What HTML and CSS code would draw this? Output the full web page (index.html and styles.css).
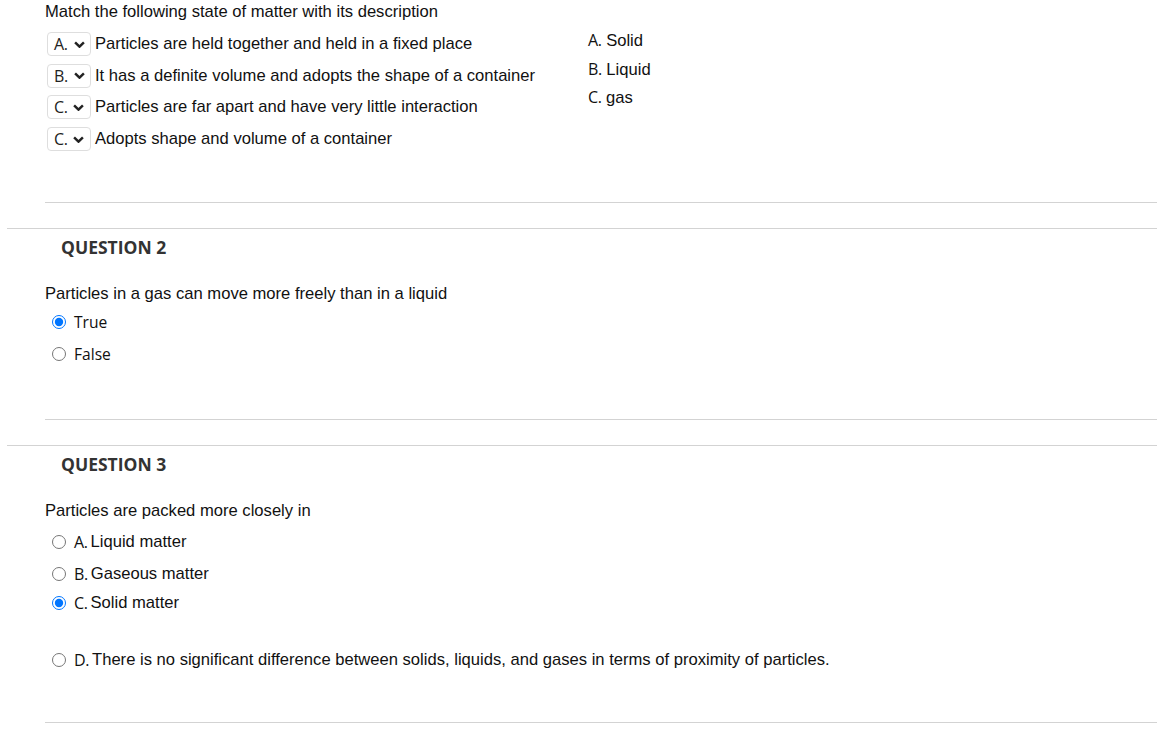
FILE: index.html
```html
<!DOCTYPE html>
<html lang="en">
<head>
  <meta charset="UTF-8">
  <title>Quiz - States of Matter</title>
  <link rel="stylesheet" href="styles.css">
</head>
<body>
  <!-- Question 1: matching -->
  <div class="question q1">
    <div class="prompt first">Match the following state of matter with its description</div>
    <div class="match">
      <div class="match-left">
        <div class="match-row">
          <span class="select">A.<svg class="chev" viewBox="0 0 10 6"><path d="M1 1l4 4 4-4" /></svg></span>
          <span class="desc">Particles are held together and held in a fixed place</span>
        </div>
        <div class="match-row">
          <span class="select">B.<svg class="chev" viewBox="0 0 10 6"><path d="M1 1l4 4 4-4" /></svg></span>
          <span class="desc">It has a definite volume and adopts the shape of a container</span>
        </div>
        <div class="match-row">
          <span class="select">C.<svg class="chev" viewBox="0 0 10 6"><path d="M1 1l4 4 4-4" /></svg></span>
          <span class="desc">Particles are far apart and have very little interaction</span>
        </div>
        <div class="match-row">
          <span class="select">C.<svg class="chev" viewBox="0 0 10 6"><path d="M1 1l4 4 4-4" /></svg></span>
          <span class="desc">Adopts shape and volume of a container</span>
        </div>
      </div>
      <div class="match-right">
        <div class="answer"><span class="letter">A.</span> Solid</div>
        <div class="answer"><span class="letter">B.</span> Liquid</div>
        <div class="answer"><span class="letter">C.</span> gas</div>
      </div>
    </div>
  </div>
  <div class="rule short r1"></div>
  <div class="rule long"></div>

  <!-- Question 2: true / false -->
  <div class="question q2">
    <div class="q-title">QUESTION 2</div>
    <div class="prompt">Particles in a gas can move more freely than in a liquid</div>
    <label class="option tf"><input type="radio" name="q2" checked><span>True</span></label>
    <label class="option tf"><input type="radio" name="q2"><span>False</span></label>
  </div>
  <div class="rule short r2"></div>
  <div class="rule long"></div>

  <!-- Question 3: multiple choice -->
  <div class="question q3">
    <div class="q-title">QUESTION 3</div>
    <div class="prompt">Particles are packed more closely in</div>
    <label class="option"><input type="radio" name="q3"><span class="letter">A.</span><span class="opt-text">Liquid matter</span></label>
    <label class="option"><input type="radio" name="q3"><span class="letter">B.</span><span class="opt-text">Gaseous matter</span></label>
    <label class="option opt-c"><input type="radio" name="q3" checked><span class="letter">C.</span><span class="opt-text">Solid matter</span></label>
    <label class="option opt-d"><input type="radio" name="q3"><span class="letter">D.</span><span class="opt-text">There is no significant difference between solids, liquids, and gases in terms of proximity of particles.</span></label>
  </div>
  <div class="rule short r3"></div>
</body>
</html>
```

FILE: styles.css
```css
body {
  margin: 0;
  padding: 0;
  background: #fff;
  color: #111;
  font-family: 'Liberation Sans', Arial, sans-serif;
  font-size: 16.6px;
}
.question {
  padding-left: 45px;
}
.prompt {
  line-height: 20px;
  height: 20px;
}
.prompt.first {
  padding-top: 2px;
}
.match {
  display: flex;
  margin-top: 10px;
}
.match-left {
  width: 543px;
  display: flex;
  flex-direction: column;
  gap: 7.7px;
}
.match-row {
  display: flex;
  align-items: center;
  height: 24px;
}
.select {
  display: inline-flex;
  align-items: center;
  box-sizing: border-box;
  width: 44px;
  height: 24px;
  margin-left: 2px;
  margin-right: 4px;
  padding-left: 6px;
  border: 1px solid #dedede;
  border-radius: 4px;
  font-family: 'Open Sans', 'Noto Sans', sans-serif;
  font-size: 16px;
  letter-spacing: -0.4px;
  color: #222;
}
.chev {
  width: 11px;
  height: 7px;
  margin-left: 6px;
  fill: none;
  stroke: #222;
  stroke-width: 2.2;
}
.desc {
  color: #111;
}
.match-right {
  margin-top: -6px;
}
.answer {
  line-height: 28.5px;
  height: 28.5px;
}
.letter {
  font-family: 'Open Sans', 'Noto Sans', sans-serif;
  font-size: 16px;
  letter-spacing: -0.4px;
}
.rule {
  height: 1px;
  background: #d3d3d3;
}
.rule.short {
  margin-left: 45px;
}
.rule.long {
  margin-left: 7px;
  margin-top: 25px;
}
.r1 {
  margin-top: 51px;
}
.r2 {
  margin-top: 49px;
}
.r3 {
  margin-top: 46px;
}
.q-title {
  margin-top: 6px;
  margin-left: 16px;
  line-height: 24px;
  height: 24px;
  font-family: 'Open Sans', 'Noto Sans', sans-serif;
  font-weight: bold;
  font-size: 17.5px;
  color: #333;
}
.q2 .prompt {
  margin-top: 25px;
}
.q3 .prompt {
  margin-top: 25px;
}
.option {
  display: flex;
  align-items: center;
  height: 32px;
}
.option input {
  width: 14px;
  height: 14px;
  margin: 0 8px 0 7px;
}
.q2 .prompt + .option {
  margin-top: 2px;
}
.q3 .prompt + .option {
  margin-top: 5px;
}
.tf span {
  font-family: 'Open Sans', 'Noto Sans', sans-serif;
  font-size: 15.6px;
}
.opt-text {
  margin-left: 3px;
}
.opt-c {
  height: 26px;
  padding-bottom: 2px;
}
.opt-d {
  margin-top: 26px;
}
```
